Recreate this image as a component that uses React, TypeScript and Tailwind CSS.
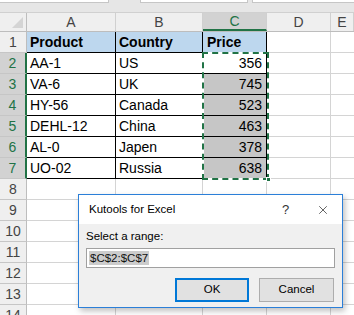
import { X } from "lucide-react";

const cols = [
  { key: "A", w: "w-[89px]" },
  { key: "B", w: "w-[87px]" },
  { key: "C", w: "w-[64px]" },
  { key: "D", w: "w-[64px]" },
  { key: "E", w: "flex-1" },
];

const data = [
  ["AA-1", "US", "356"],
  ["VA-6", "UK", "745"],
  ["HY-56", "Canada", "523"],
  ["DEHL-12", "China", "463"],
  ["AL-0", "Japen", "378"],
  ["UO-02", "Russia", "638"],
];

function Row({ n }: { n: number }) {
  const selected = n >= 2 && n <= 7;
  const inTable = n >= 1 && n <= 7;
  const rec = n >= 2 && n <= 7 ? data[n - 2] : null;
  const tb = "border-b border-black";
  return (
    <div className="flex h-[21px] shrink-0">
      <div
        className={`w-[27px] shrink-0 flex items-center justify-center border-b border-[#c6c6c6] text-[14px] ${
          selected
            ? "bg-[#d2d2d2] text-[#217346] border-r-2 border-r-[#217346]"
            : "bg-[#efefef] text-[#444] border-r border-r-[#bdbdbd]"
        }`}
      >
        {n}
      </div>
      {/* A */}
      <div
        className={`w-[89px] shrink-0 flex items-center px-[3px] text-[14px] text-black ${
          n === 1 ? "bg-[#bdd7ee] font-bold" : "bg-white"
        } ${inTable ? `${tb} border-r border-r-black` : "border-b border-[#d4d4d4] border-r border-r-[#d4d4d4]"}`}
      >
        {n === 1 ? "Product" : rec?.[0]}
      </div>
      {/* B */}
      <div
        className={`w-[87px] shrink-0 flex items-center px-[3px] text-[14px] text-black ${
          n === 1 ? "bg-[#bdd7ee] font-bold" : "bg-white"
        } ${inTable ? `${tb} border-r border-r-black` : "border-b border-[#d4d4d4] border-r border-r-[#d4d4d4]"}`}
      >
        {n === 1 ? "Country" : rec?.[1]}
      </div>
      {/* C */}
      <div
        className={`w-[64px] shrink-0 flex items-center px-[4px] text-[14px] text-black ${
          n === 1 ? "bg-[#bdd7ee] font-bold justify-start" : "justify-end"
        } ${n === 2 || n > 7 ? "bg-white" : n > 2 ? "bg-[#c6c6c6]" : ""} ${
          inTable ? `${tb} border-r border-r-black` : "border-b border-[#d4d4d4] border-r border-r-[#d4d4d4]"
        }`}
      >
        {n === 1 ? "Price" : rec?.[2]}
      </div>
      <div className="w-[64px] shrink-0 bg-white border-b border-r border-[#d4d4d4]" />
      <div className="flex-1 bg-white border-b border-[#d4d4d4]" />
    </div>
  );
}

export default function App() {
  return (
    <div
      className="relative w-[354px] h-[315px] overflow-hidden bg-white select-none"
      style={{ fontFamily: '"Liberation Sans", Arial, sans-serif' }}
    >
      {/* formula bar edge */}
      <div className="h-[13px] bg-[#e6e6e6] flex items-start border-b border-[#d0d0d0]">
        <div className="w-[109px] h-[3px] bg-white border-r border-b border-[#c6c6c6]" />
        <div className="w-[31px]" />
        <div className="w-[108px] h-[3px] bg-white border-l border-r border-b border-[#c6c6c6]" />
        <div className="w-[4px]" />
        <div className="flex-1 h-[3px] bg-white border-l border-b border-[#c6c6c6]" />
      </div>

      {/* column headers */}
      <div className="flex h-[19px] bg-[#efefef] border-b border-[#bdbdbd]">
        <div className="w-[27px] shrink-0 border-r border-[#bdbdbd] relative">
          <div className="absolute right-[3px] bottom-[3px] w-0 h-0 border-l-[11px] border-l-transparent border-b-[11px] border-b-[#d4d4d4]" />
        </div>
        {cols.map((c) => (
          <div
            key={c.key}
            className={`${c.w} shrink-0 flex items-center justify-center text-[14px] border-r border-[#d0d0d0] ${
              c.key === "C"
                ? "bg-[#d2d2d2] text-[#217346] border-b-2 border-b-[#217346]"
                : "text-[#444]"
            }`}
          >
            {c.key}
          </div>
        ))}
      </div>

      {Array.from({ length: 14 }, (_, i) => (
        <Row key={i} n={i + 1} />
      ))}

      {/* marching ants around C2:C7 */}
      <div className="absolute left-[202px] top-[52px] w-[67px] h-[128px] border-2 border-white pointer-events-none">
        <div className="absolute -inset-[2px] border-2 border-dashed border-[#217346]" />
        <div className="absolute -right-[4px] -bottom-[4px] w-[5px] h-[5px] bg-[#217346] border border-white" />
      </div>

      {/* dialog */}
      <div
        className="absolute left-[78px] top-[194px] w-[265px] h-[114px] border border-[#2b7fd8] bg-[#f0f0f0] shadow-[2px_3px_6px_rgba(0,0,0,0.25)] text-[11.5px] text-black"
        style={{ fontFamily: '"Liberation Sans", "Noto Sans", sans-serif' }}
      >
        <div className="h-[29px] bg-white flex items-center pl-[10px]">
          <span className="flex-1">Kutools for Excel</span>
          <span className="w-[22px] text-[13px] text-[#333]">?</span>
          <span className="w-[38px] flex justify-center">
            <X className="w-[14px] h-[14px] text-[#222]" strokeWidth={1.2} />
          </span>
        </div>
        <div className="px-[7px] pt-[5px]">
          <div className="h-[16px] flex items-center">Select a range:</div>
          <div className="mt-[3px] h-[20px] bg-white border border-[#a0a0a0] flex items-center pl-[2px]">
            <span className="bg-[#cccccc] text-[#111] leading-[14px] px-[1px]">$C$2:$C$7</span>
          </div>
          <div className="flex justify-end gap-[10px] mt-[10px] pr-[1px]">
            <button className="w-[74px] h-[24px] bg-[#e1e1e1] border-2 border-[#0078d7] text-[11.5px]">
              OK
            </button>
            <button className="w-[75px] h-[24px] bg-[#e1e1e1] border border-[#adadad] text-[11.5px]">
              Cancel
            </button>
          </div>
        </div>
      </div>
    </div>
  );
}
